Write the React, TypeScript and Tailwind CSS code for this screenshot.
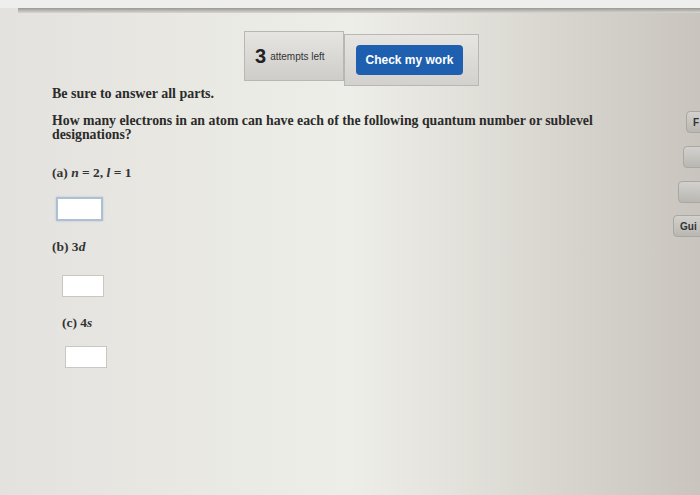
import React from 'react'

const serif = { fontFamily: '"Liberation Serif", "Times New Roman", serif' }
const sans = { fontFamily: '"Liberation Sans", Arial, sans-serif' }

const AnswerBox = ({ focused = false, className = '' }: { focused?: boolean; className?: string }) => (
  <div
    className={`h-[22px] w-[42px] bg-white ${
      focused ? 'border-2 border-[#aebfd3] shadow-[0_0_2px_#b8c8da]' : 'border border-[#c9c7c3]'
    } ${className}`}
  />
)

const SideButton = ({ label, className = '' }: { label?: string; className?: string }) => (
  <div
    className={`flex h-[22px] w-[60px] items-center rounded-[4px] border border-[#a9a7a2] bg-gradient-to-b from-[#d3d1cd] to-[#b9b7b2] pl-[6px] text-[10px] font-bold text-[#333] ${className}`}
    style={sans}
  >
    {label}
  </div>
)

export default function App() {
  return (
    <div className="relative h-[495px] w-[700px] overflow-hidden bg-gradient-to-r from-[#e3e2de] via-[#eeeee8] to-[#c9c5be]">
      {/* top strip with shadow edge */}
      <div className="h-[8px] bg-[#eeeeec]" />
      <div className="ml-[18px] h-[5px] bg-gradient-to-b from-[#9a9894] to-[#d8d7d3]" />

      <div className="flex">
        <div className="flex-1 pl-[52px]">
          {/* attempts + check header */}
          <div className="mt-[18px] ml-[192px] flex">
            <div className="flex h-[50px] w-[100px] items-center gap-[4px] border border-[#b9b7b3] bg-gradient-to-b from-[#e6e5e2] to-[#cfcdc9] pl-[10px]" style={sans}>
              <span className="text-[20px] font-bold leading-none text-[#222]">3</span>
              <span className="text-[10px] text-[#333]">attempts left</span>
            </div>
            <div className="mt-[3px] flex h-[52px] w-[135px] items-center border border-[#b9b7b3] bg-gradient-to-b from-[#e6e5e2] to-[#d3d1cd] pl-[11px]">
              <div
                className="flex h-[30px] w-[107px] items-center justify-center rounded-[4px] bg-[#1f5fb0] text-[12px] font-bold text-white"
                style={sans}
              >
                Check my work
              </div>
            </div>
          </div>

          <div className="mt-[-1px] text-[14px] font-bold leading-[18px] text-[#2b2b2b]" style={serif}>
            Be sure to answer all parts.
          </div>

          <div className="mt-[11px] w-[560px] text-[13.8px] font-bold leading-[14px] text-[#2b2b2b]" style={serif}>
            How many electrons in an atom can have each of the following quantum number or sublevel designations?
          </div>

          <div className="mt-[22px] text-[13.5px] font-bold leading-[18px] text-[#333]" style={serif}>
            (a) <i>n</i> = 2, <i>l</i> = 1
          </div>
          <AnswerBox focused className="mt-[15px] ml-[4px] w-[47px] h-[24px]" />

          <div className="mt-[17px] text-[13.5px] font-bold leading-[18px] text-[#333]" style={serif}>
            (b) 3<i>d</i>
          </div>
          <AnswerBox className="mt-[19px] ml-[10px]" />

          <div className="mt-[17px] ml-[10px] text-[13.5px] font-bold leading-[18px] text-[#333]" style={serif}>
            (c) 4<i>s</i>
          </div>
          <AnswerBox className="mt-[14px] ml-[13px]" />
        </div>

        {/* right sidebar, clipped by the window edge */}
        <div className="w-[28px] overflow-hidden pt-[98px]">
          <SideButton label="F" className="ml-[14px]" />
          <SideButton className="mt-[13px] ml-[11px]" />
          <SideButton className="mt-[13px] ml-[6px]" />
          <SideButton label="Gui" className="mt-[12px] ml-[1px]" />
        </div>
      </div>
    </div>
  )
}
